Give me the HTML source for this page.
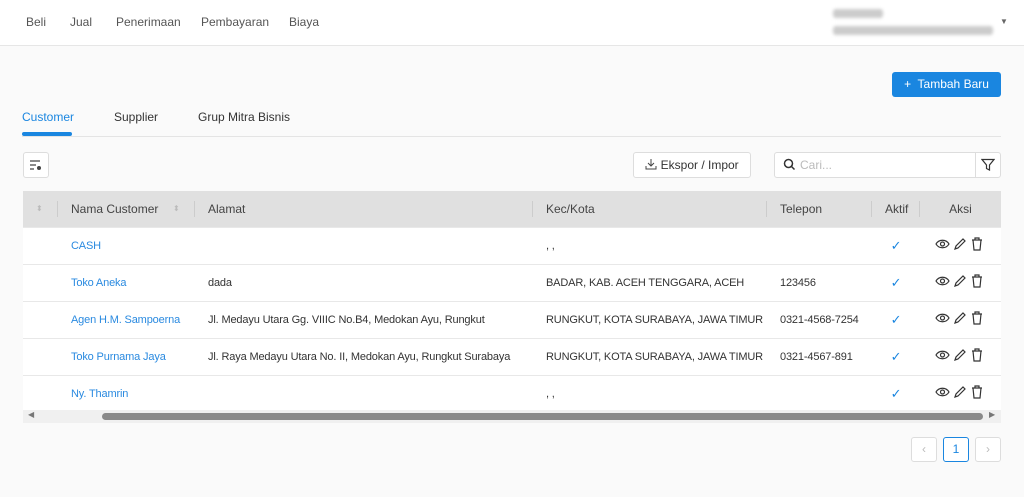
<!DOCTYPE html>
<html><head><meta charset="utf-8"><style>
*{box-sizing:border-box;margin:0;padding:0}
body{width:1024px;height:497px;background:#fafafa;font-family:"Liberation Sans",sans-serif;font-size:12px;color:#333;position:relative;overflow:hidden}
.abs{position:absolute}
.top{left:0;top:0;width:1024px;height:46px;background:#fff;border-bottom:1px solid #e6e6e6}
.nav{top:15px;font-size:12px;color:#555}
.btn{left:892px;top:72px;width:109px;height:25px;background:#1a86e0;border-radius:3px;color:#fff;font-size:12px;line-height:25px;text-align:center}
.tab{top:110px;font-size:12px;color:#333}
.box{background:#fff;border:1px solid #ddd;border-radius:3px}
table{position:absolute;left:23px;top:191px;width:978px;border-collapse:collapse;background:#fff;table-layout:fixed}
th{background:#e0e0e0;height:36px;font-weight:normal;text-align:left;color:#444;font-size:12px;padding-left:13px;position:relative}
td{height:37px;border-top:1px solid #e8e8e8;padding-left:13px;font-size:11px;letter-spacing:-0.15px;color:#333;white-space:nowrap;overflow:hidden}
td.n{color:#2a8ae0}
.sep{position:absolute;right:0;top:10px;height:16px;border-right:1px solid #ccc}
.c{text-align:center;padding-left:0}
.chk{color:#1a86e0;font-size:13px}
</style></head><body>
<div class="abs top"></div>
<div class="abs nav" style="left:26px">Beli</div>
<div class="abs nav" style="left:70px">Jual</div>
<div class="abs nav" style="left:116px">Penerimaan</div>
<div class="abs nav" style="left:201px">Pembayaran</div>
<div class="abs nav" style="left:289px">Biaya</div>
<div class="abs" style="left:833px;top:9px;width:50px;height:9px;background:#ccc;border-radius:3px;filter:blur(1.5px)"></div>
<div class="abs" style="left:833px;top:26px;width:160px;height:9px;background:#ccc;border-radius:3px;filter:blur(1.5px)"></div>
<div class="abs" style="left:1000px;top:17px;font-size:8px;color:#666">▼</div>
<div class="abs btn">+&nbsp; Tambah Baru</div>
<div class="abs tab" style="left:22px;color:#1a86e0">Customer</div>
<div class="abs tab" style="left:114px">Supplier</div>
<div class="abs tab" style="left:198px">Grup Mitra Bisnis</div>
<div class="abs" style="left:22px;top:132px;width:50px;height:4px;background:#1a86e0;border-radius:2px"></div>
<div class="abs" style="left:22px;top:136px;width:979px;height:1px;background:#e4e4e4"></div>
<div class="abs box" style="left:23px;top:152px;width:26px;height:26px">
<svg width="24" height="24" viewBox="0 0 24 24"><path d="M6 8h10M6 12h6M6 16h4" stroke="#444" stroke-width="1.2"/><circle cx="15" cy="15" r="2" fill="#444"/></svg></div>
<div class="abs box" style="left:633px;top:152px;width:118px;height:26px;line-height:24px;text-align:center;font-size:12px">
<svg width="12" height="12" viewBox="0 0 12 12" style="vertical-align:-1px"><path d="M6 1v7M3 5l3 3 3-3M1 8v3h10V8" stroke="#444" fill="none"/></svg> Ekspor / Impor</div>
<div class="abs box" style="left:774px;top:152px;width:227px;height:26px"></div>
<div class="abs" style="left:975px;top:153px;width:1px;height:24px;background:#ddd"></div>
<svg class="abs" style="left:783px;top:158px" width="13" height="13" viewBox="0 0 13 13"><circle cx="5.5" cy="5.5" r="4" stroke="#333" stroke-width="1.5" fill="none"/><path d="M8.5 8.5l3 3" stroke="#333" stroke-width="1.5"/></svg>
<div class="abs" style="left:800px;top:158px;color:#bbb;font-size:12px">Cari...</div>
<svg class="abs" style="left:981px;top:158px" width="14" height="14" viewBox="0 0 14 14"><path d="M1 1.5h12L8.5 7v5l-3-1.5V7z" stroke="#333" stroke-width="1.2" fill="none"/></svg>
<table>
<colgroup><col style="width:35px"><col style="width:137px"><col style="width:338px"><col style="width:234px"><col style="width:105px"><col style="width:48px"><col style="width:81px"></colgroup>
<tr><th style="color:#bbb;font-size:8px">⬍<span class="sep"></span></th><th>Nama Customer<span class="abs" style="left:115px;color:#bbb;font-size:8px;top:13px">⬍</span><span class="sep"></span></th><th>Alamat<span class="sep"></span></th><th>Kec/Kota<span class="sep"></span></th><th>Telepon<span class="sep"></span></th><th>Aktif<span class="sep"></span></th><th class="c">Aksi</th></tr>
<tr><td></td><td class="n">CASH</td><td></td><td>, ,</td><td></td><td class="chk c">✓</td><td class="c ic"></td></tr>
<tr><td></td><td class="n">Toko Aneka</td><td>dada</td><td>BADAR, KAB. ACEH TENGGARA, ACEH</td><td>123456</td><td class="chk c">✓</td><td class="c ic"></td></tr>
<tr><td></td><td class="n">Agen H.M. Sampoerna</td><td>Jl. Medayu Utara Gg. VIIIC No.B4, Medokan Ayu, Rungkut</td><td>RUNGKUT, KOTA SURABAYA, JAWA TIMUR</td><td>0321-4568-7254</td><td class="chk c">✓</td><td class="c ic"></td></tr>
<tr><td></td><td class="n">Toko Purnama Jaya</td><td>Jl. Raya Medayu Utara No. II, Medokan Ayu, Rungkut Surabaya</td><td>RUNGKUT, KOTA SURABAYA, JAWA TIMUR</td><td>0321-4567-891</td><td class="chk c">✓</td><td class="c ic"></td></tr>
<tr><td></td><td class="n">Ny. Thamrin</td><td></td><td>, ,</td><td></td><td class="chk c">✓</td><td class="c ic"></td></tr>
</table>
<div class="abs" style="left:23px;top:410px;width:978px;height:13px;background:#f0f0f0"></div>
<div class="abs" style="left:102px;top:413px;width:881px;height:7px;background:#8a8a8a;border-radius:4px"></div>
<div class="abs" style="left:28px;top:410px;font-size:8px;color:#777">◀</div>
<div class="abs" style="left:989px;top:410px;font-size:8px;color:#777">▶</div>
<div class="abs box" style="left:911px;top:437px;width:26px;height:25px;text-align:center;line-height:23px;color:#bbb">‹</div>
<div class="abs box" style="left:943px;top:437px;width:26px;height:25px;text-align:center;line-height:23px;color:#1a86e0;border-color:#1a86e0">1</div>
<div class="abs box" style="left:975px;top:437px;width:26px;height:25px;text-align:center;line-height:23px;color:#bbb">›</div>
<script>
var s='<svg width="52" height="14" viewBox="0 0 52 14"><path d="M1 7c3-5 10-5 13 0-3 5-10 5-13 0z" stroke="#333" fill="none" stroke-width="1.2"/><circle cx="7.5" cy="7" r="2" stroke="#333" fill="none" stroke-width="1.2"/><path d="M20 12l1-3 7-7 2 2-7 7z" stroke="#333" fill="none" stroke-width="1.2"/><path d="M37 3h10M40 3V1h4v2M38 3l1 10h6l1-10" stroke="#333" fill="none" stroke-width="1.2"/></svg>';
document.querySelectorAll('.ic').forEach(function(e){e.innerHTML=s});
</script>
</body></html>
